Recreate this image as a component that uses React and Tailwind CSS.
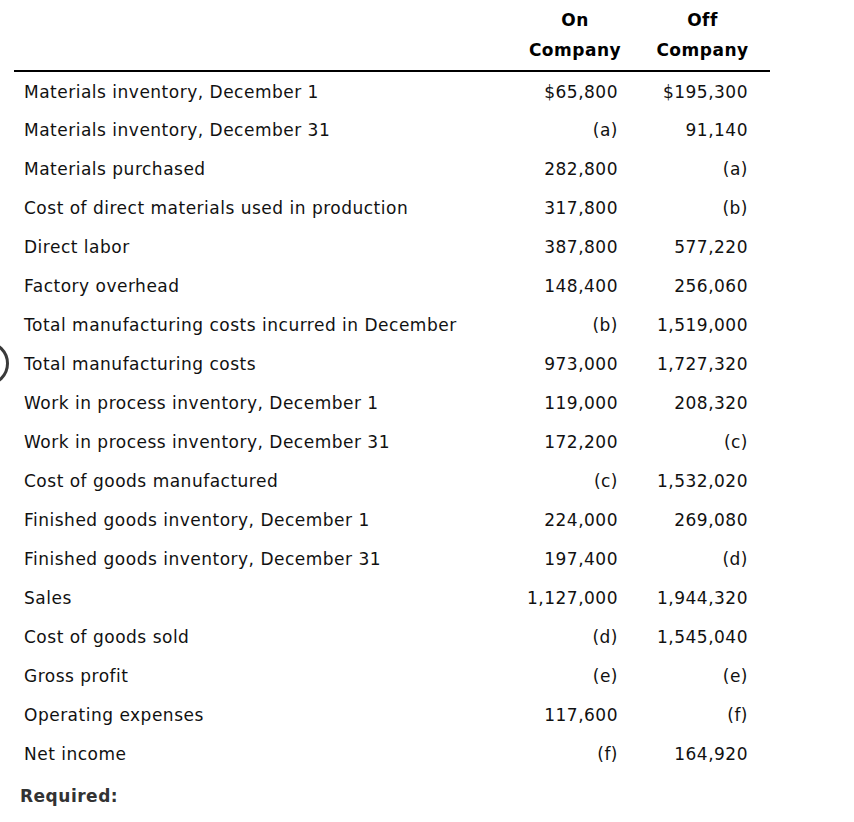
const ROWS = [
  ['Materials inventory, December 1', '$65,800', '$195,300'],
  ['Materials inventory, December 31', '(a)', '91,140'],
  ['Materials purchased', '282,800', '(a)'],
  ['Cost of direct materials used in production', '317,800', '(b)'],
  ['Direct labor', '387,800', '577,220'],
  ['Factory overhead', '148,400', '256,060'],
  ['Total manufacturing costs incurred in December', '(b)', '1,519,000'],
  ['Total manufacturing costs', '973,000', '1,727,320'],
  ['Work in process inventory, December 1', '119,000', '208,320'],
  ['Work in process inventory, December 31', '172,200', '(c)'],
  ['Cost of goods manufactured', '(c)', '1,532,020'],
  ['Finished goods inventory, December 1', '224,000', '269,080'],
  ['Finished goods inventory, December 31', '197,400', '(d)'],
  ['Sales', '1,127,000', '1,944,320'],
  ['Cost of goods sold', '(d)', '1,545,040'],
  ['Gross profit', '(e)', '(e)'],
  ['Operating expenses', '117,600', '(f)'],
  ['Net income', '(f)', '164,920'],
]

export default function App() {
  return (
    <div
      className="relative min-h-[822px] w-[854px] overflow-hidden bg-white text-[17px] tracking-[0.5px] text-[#111]"
      style={{ fontFamily: '"DejaVu Sans", Verdana, sans-serif' }}
    >
      {/* floating round button, mostly off screen */}
      <div className="absolute left-[-36px] top-[341px] h-[45px] w-[45px] rounded-full border-[3px] border-[#3a3a3a]" />

      <div className="pl-[14px] pt-[5px]">
        <table className="w-[756px] border-collapse">
          <thead>
            <tr className="border-b-2 border-black">
              <th className="w-[501px]" />
              <th className="w-[120px] pb-[5px] text-center font-bold leading-[30px] text-black">
                On
                <br />
                Company
              </th>
              <th className="pb-[5px] text-center font-bold leading-[30px] text-black">
                Off
                <br />
                Company
              </th>
            </tr>
          </thead>
          <tbody>
            {ROWS.map(([label, on, off]) => (
              <tr key={label} className="h-[39px]">
                <td className="pl-[10px] pt-[3px] text-left">{label}</td>
                <td className="pr-[17px] pt-[3px] text-right">{on}</td>
                <td className="pr-[22px] pt-[3px] text-right">{off}</td>
              </tr>
            ))}
          </tbody>
        </table>
        <div className="mt-[13px] pl-[6px] font-bold leading-[20px] text-[#333]">Required:</div>
      </div>
    </div>
  )
}
